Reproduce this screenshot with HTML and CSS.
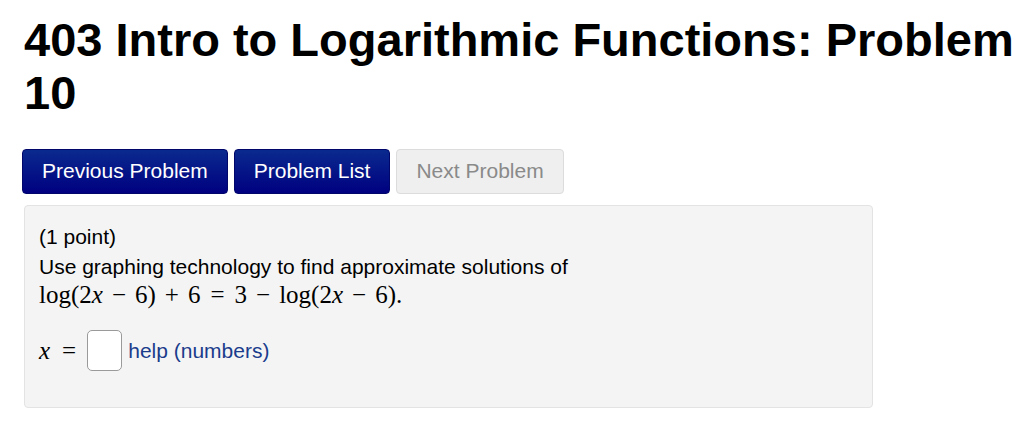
FILE: index.html
```html
<!DOCTYPE html>
<html>
<head>
<meta charset="utf-8">
<link rel="stylesheet" href="styles.css">
</head>
<body>
<h1 class="title">403 Intro to Logarithmic Functions: Problem 10</h1>
<div class="nav">
  <a class="btn primary">Previous Problem</a>
  <a class="btn primary">Problem List</a>
  <a class="btn disabled">Next Problem</a>
</div>
<div class="problem">
  <div class="line">(1 point)</div>
  <div class="line">Use graphing technology to find approximate solutions of</div>
  <div class="math eq"><span class="rm">log(2</span><i>x</i><span class="op">−</span><span class="rm">6)</span><span class="op">+</span><span class="rm">6</span><span class="rel">=</span><span class="rm">3</span><span class="op">−</span><span class="rm">log(2</span><i>x</i><span class="op">−</span><span class="rm">6).</span></div>
  <div class="answer">
    <span class="math"><i>x</i><span class="rel">=</span></span>
    <span class="input"></span>
    <a class="help">help (numbers)</a>
  </div>
</div>
</body>
</html>
```
FILE: styles.css
```css
html, body {
  margin: 0;
  padding: 0;
  background: #fff;
  overflow: hidden;
}
body {
  font-family: "Liberation Sans", Arial, sans-serif;
  color: #000;
  padding: 0 24px;
}
.title {
  margin: 0 -24px 0 0;
  padding-top: 13px;
  font-size: 47px;
  line-height: 53px;
  font-weight: bold;
}
.nav {
  display: flex;
  gap: 6px;
  margin-top: 30px;
  margin-left: -2px;
}
.btn {
  display: inline-block;
  height: 45px;
  box-sizing: border-box;
  padding: 0 19px;
  line-height: 42px;
  font-size: 21px;
  border-radius: 4px;
  border: 1px solid transparent;
}
.primary {
  color: #fff;
  background: linear-gradient(#0a2a8e, #000080);
  border-color: #00066a;
}
.disabled {
  color: #8a8a8a;
  background: #efefef;
  border-color: #dcdcdc;
}
.problem {
  margin-top: 11px;
  width: 849px;
  height: 203px;
  box-sizing: border-box;
  background: #f4f4f4;
  border: 1px solid #e3e3e3;
  border-radius: 4px;
  padding: 16px 14px;
  font-size: 21px;
}
.line {
  line-height: 30px;
}
.math {
  font-family: "Liberation Serif", serif;
  font-size: 25px;
}
.eq {
  line-height: 34px;
  margin-top: -4px;
}
.math i {
  font-style: italic;
}
.op {
  margin: 0 9px;
}
.rel {
  margin: 0 10px;
}
.answer {
  display: flex;
  align-items: center;
  margin-top: 18px;
}
.answer .rel {
  margin: 0 10px 0 12px;
}
.input {
  display: inline-block;
  width: 35px;
  height: 41px;
  box-sizing: border-box;
  background: #fff;
  border: 1px solid #9a9a9a;
  border-radius: 5px;
  margin: 0 6px 0 1px;
}
.help {
  color: #1b3c8c;
  font-size: 21px;
}
```
